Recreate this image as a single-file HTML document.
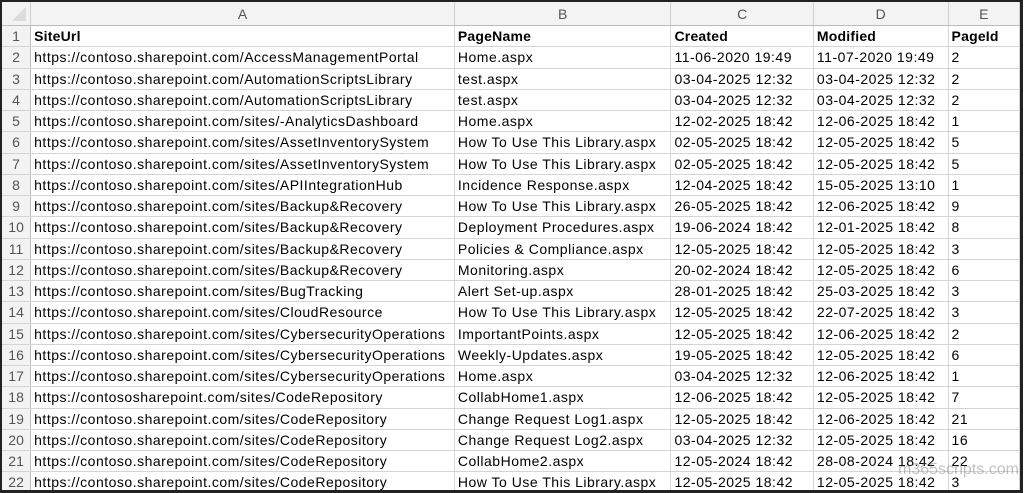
<!DOCTYPE html>
<html><head><meta charset="utf-8"><style>
html,body{margin:0;padding:0;background:#fff;width:1024px;height:493px;overflow:hidden}
.wrap{position:absolute;left:0;top:0;width:1018px;height:488px;border:2px solid #222;border-right-width:3px;border-bottom-width:3px;overflow:hidden;background:#fff}
table{border-collapse:collapse;table-layout:fixed;font-family:"Liberation Sans",sans-serif;font-size:14px;letter-spacing:0.5px;color:#000}
td{border-right:1px solid #d4d4d4;border-bottom:1px solid #d4d4d4;padding:0 0 0 3px;white-space:nowrap;overflow:hidden;height:20.25px;line-height:20px}
tr.h td{background:#f3f3f3;color:#555;text-align:center;font-size:14px;letter-spacing:0;height:23px;line-height:22px;border-bottom:1px solid #bcbcbc;border-right:1px solid #d0d0d0;padding:0}
td.n{background:#f3f3f3;color:#555;text-align:center;padding:0;border-right:1px solid #bcbcbc;font-size:14px;letter-spacing:0}
tr.b td:not(.n){font-weight:bold;letter-spacing:0.2px}
</style></head><body><div class="wrap">
<table>
<colgroup><col style="width:29px"><col style="width:424px"><col style="width:217px"><col style="width:143px"><col style="width:135px"><col style="width:72px"></colgroup>
<tr class="h"><td style="position:relative"><svg width="18" height="18" style="position:absolute;right:2px;bottom:2px"><polygon points="16,2 16,16 2,16" fill="#dcdcdc"/></svg></td><td>A</td><td>B</td><td>C</td><td>D</td><td>E</td></tr>
<tr class="b"><td class="n">1</td><td>SiteUrl</td><td>PageName</td><td>Created</td><td>Modified</td><td>PageId</td></tr>
<tr><td class="n">2</td><td>https://contoso.sharepoint.com/AccessManagementPortal</td><td>Home.aspx</td><td>11-06-2020 19:49</td><td>11-07-2020 19:49</td><td>2</td></tr>
<tr><td class="n">3</td><td>https://contoso.sharepoint.com/AutomationScriptsLibrary</td><td>test.aspx</td><td>03-04-2025 12:32</td><td>03-04-2025 12:32</td><td>2</td></tr>
<tr><td class="n">4</td><td>https://contoso.sharepoint.com/AutomationScriptsLibrary</td><td>test.aspx</td><td>03-04-2025 12:32</td><td>03-04-2025 12:32</td><td>2</td></tr>
<tr><td class="n">5</td><td>https://contoso.sharepoint.com/sites/-AnalyticsDashboard</td><td>Home.aspx</td><td>12-02-2025 18:42</td><td>12-06-2025 18:42</td><td>1</td></tr>
<tr><td class="n">6</td><td>https://contoso.sharepoint.com/sites/AssetInventorySystem</td><td>How To Use This Library.aspx</td><td>02-05-2025 18:42</td><td>12-05-2025 18:42</td><td>5</td></tr>
<tr><td class="n">7</td><td>https://contoso.sharepoint.com/sites/AssetInventorySystem</td><td>How To Use This Library.aspx</td><td>02-05-2025 18:42</td><td>12-05-2025 18:42</td><td>5</td></tr>
<tr><td class="n">8</td><td>https://contoso.sharepoint.com/sites/APIIntegrationHub</td><td>Incidence Response.aspx</td><td>12-04-2025 18:42</td><td>15-05-2025 13:10</td><td>1</td></tr>
<tr><td class="n">9</td><td>https://contoso.sharepoint.com/sites/Backup&amp;Recovery</td><td>How To Use This Library.aspx</td><td>26-05-2025 18:42</td><td>12-06-2025 18:42</td><td>9</td></tr>
<tr><td class="n">10</td><td>https://contoso.sharepoint.com/sites/Backup&amp;Recovery</td><td>Deployment Procedures.aspx</td><td>19-06-2024 18:42</td><td>12-01-2025 18:42</td><td>8</td></tr>
<tr><td class="n">11</td><td>https://contoso.sharepoint.com/sites/Backup&amp;Recovery</td><td>Policies &amp; Compliance.aspx</td><td>12-05-2025 18:42</td><td>12-05-2025 18:42</td><td>3</td></tr>
<tr><td class="n">12</td><td>https://contoso.sharepoint.com/sites/Backup&amp;Recovery</td><td>Monitoring.aspx</td><td>20-02-2024 18:42</td><td>12-05-2025 18:42</td><td>6</td></tr>
<tr><td class="n">13</td><td>https://contoso.sharepoint.com/sites/BugTracking</td><td>Alert Set-up.aspx</td><td>28-01-2025 18:42</td><td>25-03-2025 18:42</td><td>3</td></tr>
<tr><td class="n">14</td><td>https://contoso.sharepoint.com/sites/CloudResource</td><td>How To Use This Library.aspx</td><td>12-05-2025 18:42</td><td>22-07-2025 18:42</td><td>3</td></tr>
<tr><td class="n">15</td><td>https://contoso.sharepoint.com/sites/CybersecurityOperations</td><td>ImportantPoints.aspx</td><td>12-05-2025 18:42</td><td>12-06-2025 18:42</td><td>2</td></tr>
<tr><td class="n">16</td><td>https://contoso.sharepoint.com/sites/CybersecurityOperations</td><td>Weekly-Updates.aspx</td><td>19-05-2025 18:42</td><td>12-05-2025 18:42</td><td>6</td></tr>
<tr><td class="n">17</td><td>https://contoso.sharepoint.com/sites/CybersecurityOperations</td><td>Home.aspx</td><td>03-04-2025 12:32</td><td>12-06-2025 18:42</td><td>1</td></tr>
<tr><td class="n">18</td><td>https://contososharepoint.com/sites/CodeRepository</td><td>CollabHome1.aspx</td><td>12-06-2025 18:42</td><td>12-05-2025 18:42</td><td>7</td></tr>
<tr><td class="n">19</td><td>https://contoso.sharepoint.com/sites/CodeRepository</td><td>Change Request Log1.aspx</td><td>12-05-2025 18:42</td><td>12-06-2025 18:42</td><td>21</td></tr>
<tr><td class="n">20</td><td>https://contoso.sharepoint.com/sites/CodeRepository</td><td>Change Request Log2.aspx</td><td>03-04-2025 12:32</td><td>12-05-2025 18:42</td><td>16</td></tr>
<tr><td class="n">21</td><td>https://contoso.sharepoint.com/sites/CodeRepository</td><td>CollabHome2.aspx</td><td>12-05-2024 18:42</td><td>28-08-2024 18:42</td><td>22</td></tr>
<tr><td class="n">22</td><td>https://contoso.sharepoint.com/sites/CodeRepository</td><td>How To Use This Library.aspx</td><td>12-05-2025 18:42</td><td>12-05-2025 18:42</td><td>3</td></tr>
</table>
<div style="position:absolute;left:896px;top:459px;font-family:'Liberation Sans',sans-serif;font-size:16px;color:rgba(120,120,120,0.45)">m365scripts.com</div>
</div></body></html>
